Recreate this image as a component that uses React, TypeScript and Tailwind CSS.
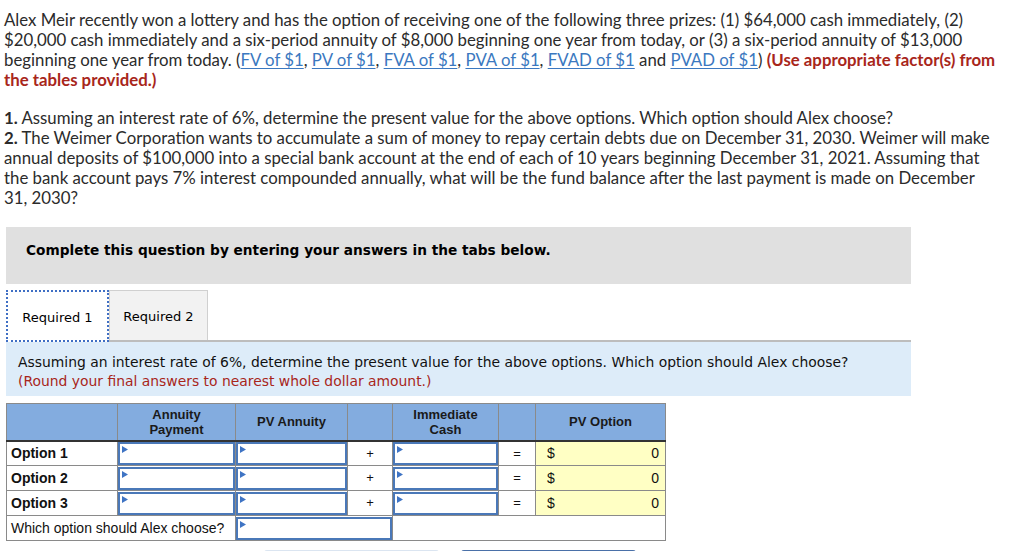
import React from 'react';

const link = 'text-[#3b78c0] underline underline-offset-2';

function Marker() {
  return (
    <svg className="absolute left-[2px] top-[2px]" width="6" height="7" viewBox="0 0 6 7">
      <polygon points="0,0 6,3.5 0,7" fill="#3f74c4" />
    </svg>
  );
}

function InputCell({ colSpan }: { colSpan?: number }) {
  return (
    <td colSpan={colSpan} className="p-0 border border-[#8a8a8a]">
      <div className="relative h-[23px] border-2 border-[#4a78b8] bg-white">
        <Marker />
      </div>
    </td>
  );
}

function Row({ label }: { label: string }) {
  return (
    <tr className="h-[25px]">
      <td className="border border-[#8a8a8a] px-[4px] font-bold text-[14px] text-[#111]">{label}</td>
      <InputCell />
      <InputCell />
      <td className="border border-[#8a8a8a] text-center text-[13px]">+</td>
      <InputCell />
      <td className="border border-[#8a8a8a] text-center text-[13px]">=</td>
      <td className="border border-[#8a8a8a] bg-[#ffffc4] px-[10px] text-[14px]">
        <div className="flex justify-between pr-0">
          <span className="pl-[1px]">$</span>
          <span className="-mr-[4px]">0</span>
        </div>
      </td>
    </tr>
  );
}

export default function App() {
  return (
    <div className="w-[1024px] h-[551px] overflow-hidden bg-white">
      <div className="pl-[4px] pt-[10px] font-['Lato',sans-serif] text-[16.8px] leading-[20px] text-[#2b2b2b] whitespace-nowrap">
        <p>
          Alex Meir recently won a lottery and has the option of receiving one of the following three prizes: (1) $64,000 cash immediately, (2)
          <br />
          $20,000 cash immediately and a six-period annuity of $8,000 beginning one year from today, or (3) a six-period annuity of $13,000
          <br />
          beginning one year from today. (<span className={link}>FV of $1</span>, <span className={link}>PV of $1</span>,{' '}
          <span className={link}>FVA of $1</span>, <span className={link}>PVA of $1</span>, <span className={link}>FVAD of $1</span> and{' '}
          <span className={link}>PVAD of $1</span>){' '}
          <span className="font-bold text-[#a8261b]">(Use appropriate factor(s) from</span>
          <br />
          <span className="font-bold text-[#a8261b]">the tables provided.)</span>
        </p>
        <p className="mt-[18px]">
          <b>1.</b> Assuming an interest rate of 6%, determine the present value for the above options. Which option should Alex choose?
          <br />
          <b>2.</b> The Weimer Corporation wants to accumulate a sum of money to repay certain debts due on December 31, 2030. Weimer will make
          <br />
          annual deposits of $100,000 into a special bank account at the end of each of 10 years beginning December 31, 2021. Assuming that
          <br />
          the bank account pays 7% interest compounded annually, what will be the fund balance after the last payment is made on December
          <br />
          31, 2030?
        </p>
      </div>

      <div className="ml-[6px] w-[905px] font-['DejaVu_Sans',Verdana,sans-serif]">
        <div className="mt-[19px] h-[57px] bg-[#e0e0e0] pl-[20px] pt-[14px] text-[13.7px] leading-[18px] font-bold text-black">
          Complete this question by entering your answers in the tabs below.
        </div>

        <div className="mt-[6px] flex items-end border-b-[2px] border-[#bdbdbd] h-[52px]">
          <div className="h-[52px] w-[103px] -mb-[2px] bg-white border-2 border-dotted border-[#3f6fc4] flex items-center justify-center pt-[3px] text-[13px] text-black">
            Required 1
          </div>
          <div className="h-[50px] w-[99px] bg-[#f2f2f2] border border-[#d0d0d0] border-b-0 flex items-center justify-center pt-[2px] text-[13px] text-black">
            Required 2
          </div>
        </div>

        <div className="h-[54px] bg-[#ddecf9] pl-[12px] pt-[11px] text-[13.9px] leading-[19px] text-[#111]">
          <p>Assuming an interest rate of 6%, determine the present value for the above options. Which option should Alex choose?</p>
          <p className="text-[#a8261b]">(Round your final answers to nearest whole dollar amount.)</p>
        </div>
      </div>

      <table className="ml-[6px] mt-[7px] border-collapse table-fixed w-[659px] font-['Liberation_Sans',Arial,sans-serif] text-[#111]">
        <colgroup>
          <col className="w-[111px]" />
          <col className="w-[118px]" />
          <col className="w-[112px]" />
          <col className="w-[45px]" />
          <col className="w-[106px]" />
          <col className="w-[37px]" />
          <col className="w-[130px]" />
        </colgroup>
        <thead>
          <tr className="h-[37px] bg-[#83acdf] text-[13px] font-bold leading-[15px] text-[#1a1a1a]">
            <th className="border border-[#8a8a8a] border-b-2 border-b-[#333]"></th>
            <th className="border border-[#8a8a8a] border-b-2 border-b-[#333]">Annuity<br />Payment</th>
            <th className="border border-[#8a8a8a] border-b-2 border-b-[#333]">PV Annuity</th>
            <th className="border border-[#8a8a8a] border-b-2 border-b-[#333]"></th>
            <th className="border border-[#8a8a8a] border-b-2 border-b-[#333]">Immediate<br />Cash</th>
            <th className="border border-[#8a8a8a] border-b-2 border-b-[#333]"></th>
            <th className="border border-[#8a8a8a] border-b-2 border-b-[#333]">PV Option</th>
          </tr>
        </thead>
        <tbody>
          <Row label="Option 1" />
          <Row label="Option 2" />
          <Row label="Option 3" />
          <tr className="h-[25px]">
            <td colSpan={2} className="border border-[#8a8a8a] px-[4px] text-[14px]">Which option should Alex choose?</td>
            <InputCell colSpan={2} />
            <td colSpan={3} className="border border-[#8a8a8a]"></td>
          </tr>
        </tbody>
      </table>

      <div className="mt-[9px] flex gap-[22px] pl-[264px]">
        <button className="h-[30px] w-[175px] rounded-[3px] border-t-2 border-[#dbe5f1] bg-[#eef3fa]"></button>
        <button className="h-[30px] w-[175px] rounded-[3px] bg-[#4a70a8]"></button>
      </div>
    </div>
  );
}
